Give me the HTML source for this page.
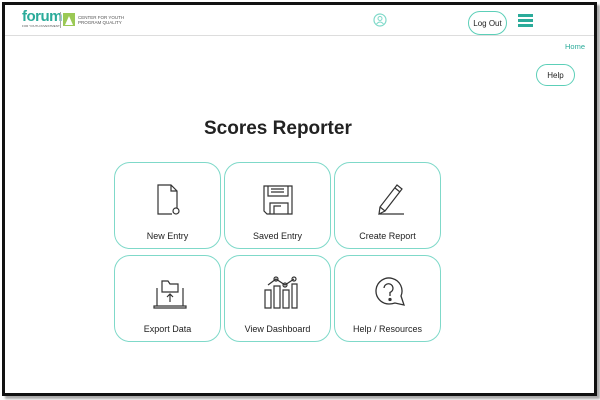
<!DOCTYPE html>
<html><head><style>
body{margin:0;width:600px;height:400px;background:#fff;font-family:"Liberation Sans",sans-serif;position:relative;overflow:hidden}
.frame{position:absolute;left:2px;top:2px;width:589px;height:388px;border:3px solid #111;box-shadow:3px 3px 2px #aaa}
.hdr{position:absolute;left:5px;top:5px;width:589px;height:30px;border-bottom:1px solid #ddd}
.btn{position:absolute;border:1.3px solid #5ccfb8;border-radius:12px;font-size:8px;color:#222;display:flex;align-items:center;justify-content:center}
.card{position:absolute;width:107px;height:87px;border:1.3px solid #7fd9c9;border-radius:16px;box-sizing:border-box}
.card span{position:absolute;left:0;right:0;top:68px;text-align:center;font-size:9px;color:#222}
.card svg{position:absolute;left:37px;top:18px}
</style></head><body>
<div class="frame"></div>
<div class="hdr"></div>
<div style="position:absolute;left:22px;top:8px;font-size:15px;color:#2bab9a;font-weight:bold;letter-spacing:-0.5px">forum</div>
<div style="position:absolute;left:22px;top:24px;font-size:3px;color:#555">FOR YOUTH INVESTMENT</div>
<div style="position:absolute;left:60px;top:12px;width:1px;height:16px;background:#aaa"></div>
<div style="position:absolute;left:63px;top:13px;width:12px;height:13px;background:#9bc955"></div>
<svg style="position:absolute;left:63px;top:13px" width="12" height="13"><path d="M2 12 L6 3 L10 12 Z" fill="#fff"/></svg>
<div style="position:absolute;left:78px;top:15px;font-size:4.5px;color:#555;line-height:5px">CENTER FOR YOUTH<br>PROGRAM QUALITY</div>
<svg style="position:absolute;left:373px;top:13px" width="14" height="14"><circle cx="7" cy="7" r="6" fill="none" stroke="#7fd9c9" stroke-width="1.2"/><circle cx="7" cy="5.5" r="2" fill="none" stroke="#7fd9c9"/><path d="M3.5 11 Q7 7 10.5 11" fill="none" stroke="#7fd9c9"/></svg>
<div class="btn" style="left:468px;top:11px;width:37px;height:22px">Log Out</div>
<div style="position:absolute;left:518px;top:14px;width:15px;height:2.5px;background:#2bab9a;box-shadow:0 5px 0 #2bab9a,0 10px 0 #2bab9a"></div>
<div style="position:absolute;left:565px;top:42px;font-size:7.5px;color:#2bab9a">Home</div>
<div class="btn" style="left:536px;top:64px;width:37px;height:20px">Help</div>
<div style="position:absolute;left:204px;top:118px;font-size:19px;font-weight:bold;color:#222">Scores Reporter</div>
<div class="card" style="left:114px;top:162px"><svg width="32" height="38" fill="none" stroke="#333" stroke-width="1.2"><path d="M20 33 H6 V4 H19 L25 10 V27 M19 4 V10 H25"/><circle cx="24" cy="30" r="3"/></svg><span>New Entry</span></div>
<div class="card" style="left:224px;top:162px"><svg width="32" height="38" fill="none" stroke="#333" stroke-width="1.2"><path d="M2 5 H30 V33 H5 L2 30 Z M6 5 V15 H26 V5 M9 8 H22 M9 11 H22 M8 33 V22 H26 V33 M12 33 V25 H19"/></svg><span>Saved Entry</span></div>
<div class="card" style="left:334px;top:162px"><svg width="36" height="38" fill="none" stroke="#333" stroke-width="1.2"><path d="M25 4 L30 8 L13 30 L7 33 L8 26 Z M23 7 L28 11 M8 26 L13 30 M7 33 H32"/></svg><span>Create Report</span></div>
<div class="card" style="left:114px;top:255px"><svg width="36" height="38" fill="none" stroke="#333" stroke-width="1.2"><path d="M5 14 V32 H31 V14 M2 32 H34 V34 H2 Z M10 7 H16 L18 10 H26 V18 H10 Z M18 28 V20 M15 23 L18 20 L21 23"/></svg><span>Export Data</span></div>
<div class="card" style="left:224px;top:255px"><svg width="38" height="38" fill="none" stroke="#333" stroke-width="1.2"><path d="M3 16 H9 V34 H3 Z M12 12 H18 V34 H12 Z M21 16 H27 V34 H21 Z M30 10 H35 V34 H30 Z M6 11 L14 5 L23 11 L32 5"/><circle cx="14" cy="5" r="2"/><circle cx="23" cy="11" r="2"/><circle cx="32" cy="5" r="2"/></svg><span>View Dashboard</span></div>
<div class="card" style="left:334px;top:255px"><svg width="38" height="38" fill="none" stroke="#333" stroke-width="1.3"><path d="M17 30 A13 13 0 1 1 29 22 L32 31 L23 29 Q20 30 17 30 Z"/><path d="M12 14 A4.5 4.5 0 1 1 18 18.5 V22"/><circle cx="18" cy="25.5" r="1" fill="#333"/></svg><span>Help / Resources</span></div>
</body></html>
